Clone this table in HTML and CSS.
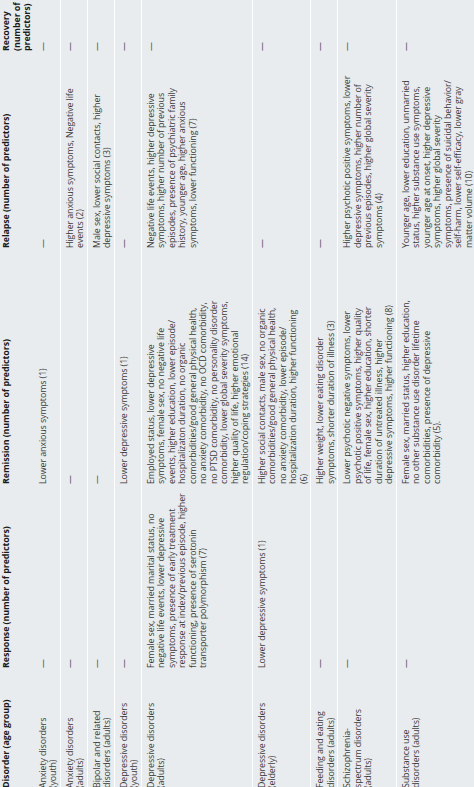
FILE: index.html
```html
<!DOCTYPE html>
<html lang="en">
<head>
<meta charset="utf-8">
<title>Predictors table</title>
<link rel="stylesheet" href="styles.css">
</head>
<body>
<div class="page">
  <table class="tbl">
    <colgroup>
      <col class="c-dis"><col class="c-resp"><col class="c-rem"><col class="c-rel"><col class="c-rec">
    </colgroup>
    <thead>
      <tr>
        <th>Disorder (age group)</th>
        <th>Response (number of predictors)</th>
        <th>Remission (number of predictors)</th>
        <th>Relapse (number of predictors)</th>
        <th>Recovery<br>(number of<br>predictors)</th>
      </tr>
    </thead>
    <tbody>
      <tr>
        <td>Anxiety disorders<br>(youth)</td>
        <td>—</td>
        <td>Lower anxious symptoms (1)</td>
        <td>—</td>
        <td>—</td>
      </tr>
      <tr>
        <td>Anxiety disorders<br>(adults)</td>
        <td>—</td>
        <td>—</td>
        <td>Higher anxious symptoms, Negative life<br>events (2)</td>
        <td>—</td>
      </tr>
      <tr>
        <td>Bipolar and related<br>disorders (adults)</td>
        <td>—</td>
        <td>—</td>
        <td>Male sex, lower social contacts, higher<br>depressive symptoms (3)</td>
        <td>—</td>
      </tr>
      <tr>
        <td>Depressive disorders<br>(youth)</td>
        <td>—</td>
        <td>Lower depressive symptoms (1)</td>
        <td>—</td>
        <td>—</td>
      </tr>
      <tr>
        <td>Depressive disorders<br>(adults)</td>
        <td>Female sex, married marital status, no<br>negative life events, lower depressive<br>symptoms, presence of early treatment<br>response at index/previous episode, higher<br>functioning, presence of serotonin<br>transporter polymorphism (7)</td>
        <td>Employed status, lower depressive<br>symptoms, female sex, no negative life<br>events, higher education, lower episode/<br>hospitalizaton duration, no organic<br>comorbidities/good general physical health,<br>no anxiety comorbidity, no OCD comorbidity,<br>no PTSD comorbidity, no personality disorder<br>comorbidity, lower global severity symptoms,<br>higher quality of life, higher emotional<br>regulation/coping strategies (14)</td>
        <td>Negative life events, higher depressive<br>symptoms, higher number of previous<br>episodes, presence of psychiatric family<br>history, younger age, higher anxious<br>symptoms, lower functioning (7)</td>
        <td>—</td>
      </tr>
      <tr>
        <td>Depressive disorders<br>(elderly)</td>
        <td>Lower depressive symptoms (1)</td>
        <td>Higher social contacts, male sex, no organic<br>comorbidities/good general physical health,<br>no anxiety comorbidity, lower episode/<br>hospitalization duration, higher functioning<br>(6)</td>
        <td>—</td>
        <td>—</td>
      </tr>
      <tr>
        <td>Feeding and eating<br>disorders (adults)</td>
        <td>—</td>
        <td>Higher weight, lower eating disorder<br>symptoms, shorter duration of illness (3)</td>
        <td>—</td>
        <td>—</td>
      </tr>
      <tr>
        <td>Schizophrenia-<br>spectrum disorders<br>(adults)</td>
        <td>—</td>
        <td>Lower psychotic negative symptoms, lower<br>psychotic positive symptoms, higher quality<br>of life, female sex, higher education, shorter<br>duration of untreated illness, higher<br>depressive symptoms, higher functioning (8)</td>
        <td>Higher psychotic positive symptoms, lower<br>depressive symptoms, higher number of<br>previous episodes, higher global severity<br>symptoms (4)</td>
        <td>—</td>
      </tr>
      <tr>
        <td>Substance use<br>disorders (adults)</td>
        <td>—</td>
        <td>Female sex, married status, higher education,<br>no other substance use disorder lifetime<br>comorbidities, presence of depressive<br>comorbidity (5).</td>
        <td>Younger age, lower education, unmarried<br>status, higher substance use symptoms,<br>younger age at onset, higher depressive<br>symptoms, higher global severity<br>symptoms, presence of suicidal behavior/<br>self-harm, lower self-efficacy, lower gray<br>matter volume (10)</td>
        <td>—</td>
      </tr>
    </tbody>
  </table>
</div>
</body>
</html>
```
FILE: styles.css
```css
html, body {
  margin: 0;
  padding: 0;
  background: #e9ecee;
}

.page {
  width: 474px;
  height: 787px;
  overflow: hidden;
  background: #e9ecee;
}

.tbl {
  width: 820px;
  table-layout: fixed;
  border-collapse: collapse;
  transform-origin: 0 0;
  transform: translateY(788px) rotate(-90deg);
  font-family: "Open Sans", "Noto Sans", sans-serif;
  font-size: 8.9px;
  letter-spacing: -0.1px;
  line-height: 10.5px;
  color: #3b3b3b;
}

.c-dis { width: 120px; }
.c-resp { width: 184px; }
.c-rem { width: 236px; }
.c-rel { width: 197px; }
.c-rec { width: 83px; }

.tbl th,
.tbl td {
  text-align: left;
  vertical-align: top;
  white-space: nowrap;
  padding: 0;
}

.tbl th {
  font-weight: 700;
  color: #1a1a1a;
  padding: 1px 0 1px 0;
}

.tbl td {
  padding: 4px 0 1px 0;
  border-bottom: 1px solid #ffffff;
}
```
